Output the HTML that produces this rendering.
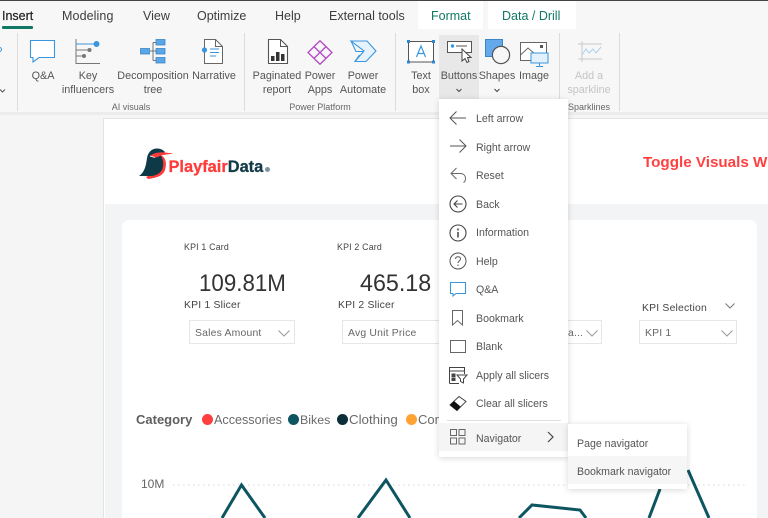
<!DOCTYPE html>
<html><head><meta charset="utf-8">
<style>
html,body{margin:0;padding:0}
body{width:768px;height:518px;overflow:hidden;position:relative;background:#f5f5f5;font-family:"Liberation Sans",sans-serif;color:#444}
.a{position:absolute}
.t{position:absolute;white-space:nowrap}
.c{position:absolute;text-align:center;white-space:nowrap;transform:translateX(-50%);font-size:10.8px;line-height:14.3px;color:#555}
.tab{position:absolute;top:9px;font-size:12.5px;line-height:15px;color:#3d3d3d;white-space:nowrap}
.g{position:absolute;top:102px;font-size:9px;line-height:11px;color:#666;transform:translateX(-50%);white-space:nowrap}
.sep{position:absolute;top:33px;width:1px;height:78px;background:#dcdcdc}
.mi{position:absolute;left:476px;font-size:10.6px;line-height:14px;color:#555;white-space:nowrap}
.din{font-size:9.5px;color:#444;letter-spacing:.2px}
.dd{position:absolute;height:24px;background:#fff;border:1px solid #e6e6e6;box-sizing:border-box;font-size:10.4px;line-height:26px;color:#666;padding-left:5px;white-space:nowrap;overflow:hidden;letter-spacing:.2px}
svg{position:absolute;overflow:visible}
</style></head>
<body>
<!-- ribbon -->
<div class="a" style="left:0;top:0;width:768px;height:1px;background:#444"></div>
<div class="a" style="left:0;top:1px;width:768px;height:112px;background:#f8f7f7"></div>
<div class="a" style="left:0;top:112px;width:768px;height:3px;background:#ececec"></div>
<div class="a" style="left:418px;top:1px;width:65px;height:28px;background:#fff"></div>
<div class="a" style="left:488px;top:1px;width:88px;height:28px;background:#fff"></div>
<div class="tab" style="left:2px;color:#222;-webkit-text-stroke:.2px #222">Insert</div>
<div class="a" style="left:2px;top:26px;width:31px;height:3px;background:#117865;border-radius:1px"></div>
<div class="tab" style="left:62px;letter-spacing:.1px">Modeling</div>
<div class="tab" style="left:143px">View</div>
<div class="tab" style="left:197px">Optimize</div>
<div class="tab" style="left:275px">Help</div>
<div class="tab" style="left:329px">External tools</div>
<div class="tab" style="left:431px;color:#117865">Format</div>
<div class="tab" style="left:502px;color:#117865">Data / Drill</div>
<div class="sep" style="left:17px"></div>
<div class="sep" style="left:244px"></div>
<div class="sep" style="left:395px"></div>
<div class="sep" style="left:559px"></div>
<div class="sep" style="left:619px"></div>
<div class="a" style="left:439px;top:35px;width:40px;height:65px;background:#e8e8e8"></div>
<div class="a" style="left:-3px;top:47px;width:5px;height:5px;border-radius:50%;border:1px solid #3a96dd;box-sizing:border-box"></div>
<svg style="left:0;top:88px" width="8" height="6"><path d="M0 1.5 L2.5 4 L5 1.5" fill="none" stroke="#555" stroke-width="1"/></svg>

<!-- Q&A -->
<svg style="left:30px;top:40px" width="26" height="24"><path d="M.5.5H24.5V17.5H9L3 22V17.5H.5Z" fill="#fff" stroke="#3a96dd" stroke-width="1.1"/></svg>
<!-- key influencers -->
<svg style="left:75px;top:39px" width="26" height="26" fill="none"><path d="M1 0V24.5H25" stroke="#777" stroke-width="1"/><path d="M1 5H20" stroke="#3a96dd" stroke-width="1"/><path d="M1 11H14" stroke="#777"/><path d="M1 17H8" stroke="#777"/><circle cx="21.5" cy="5" r="3" fill="#3a96dd"/><circle cx="14.5" cy="11" r="2" fill="#777"/><circle cx="9" cy="17" r="2" fill="#777"/></svg>
<!-- decomposition -->
<svg style="left:140px;top:39px" width="26" height="25" fill="#5ba6e6" stroke="#3a86c8" stroke-width=".8"><rect x=".5" y="9.5" width="9" height="5.5"/><rect x="16" y=".5" width="9" height="5.5"/><rect x="16" y="9.5" width="9" height="5.5"/><rect x="16" y="18.5" width="9" height="5.5"/><path d="M10 12H16M13 3.5V21.5M13 3.5H16M13 21.5H16" fill="none" stroke="#555"/></svg>
<!-- narrative -->
<svg style="left:202px;top:39px" width="22" height="26" fill="none"><path d="M2.5.5H13.5L20.5 7.5V24.5H2.5Z" fill="#fff" stroke="#666"/><path d="M13.5.5V7.5H20.5" stroke="#666"/><circle cx="2.5" cy="11" r="2.6" fill="#3a96dd"/><path d="M8 10H17M8 13.5H17M8 17H14" stroke="#3a96dd"/></svg>
<!-- paginated -->
<svg style="left:267px;top:39px" width="22" height="26" fill="none"><path d="M1.5.5H13.5L20.5 7.5V24.5H1.5Z" fill="#fff" stroke="#555" stroke-width="1.1"/><path d="M13.5.5V7.5H20.5" stroke="#555"/><rect x="4" y="17" width="3.5" height="5" fill="#333"/><rect x="9" y="13" width="3.5" height="9" fill="#333"/><rect x="14" y="15" width="3.5" height="7" fill="#333"/></svg>
<!-- power apps -->
<svg style="left:307px;top:40px" width="26" height="25" fill="none" stroke="#b14fc5" stroke-width="1.4" stroke-linejoin="round"><path d="M13 .7L25 12.5L13 24.3L1 12.5Z"/><path d="M7 6.6L19 18.4M19 6.6L7 18.4"/></svg>
<!-- power automate -->
<svg style="left:350px;top:40px" width="27" height="24" fill="none" stroke="#3a96dd" stroke-width="1.1"><path d="M1 1H17L26 11L16 21.500H5L14 11Z" fill="#e6f3fc"/><path d="M1 1L6 11.500H14M5 21.500L9.500 15"/></svg>
<!-- text box -->
<svg style="left:407px;top:40px" width="28" height="24" fill="none"><rect x="1.5" y="1.5" width="25" height="20.5" stroke="#555" fill="#fff"/><path d="M9.5 17L14 6L18.5 17M11 13.5H17" stroke="#3a96dd" stroke-width="1.2"/><g fill="#2b88d8"><rect x="0" y="0" width="3" height="3"/><rect x="25" y="0" width="3" height="3"/><rect x="0" y="20.5" width="3" height="3"/><rect x="25" y="20.5" width="3" height="3"/></g></svg>
<!-- buttons -->
<svg style="left:447px;top:41px" width="28" height="24" fill="none"><rect x=".5" y=".5" width="24" height="11" fill="#fff" stroke="#555"/><circle cx="5.5" cy="5" r="1.7" fill="#3a96dd"/><path d="M9 5H20" stroke="#555"/><path d="M15 8V20L18 17.500L20 21.500L22 20.500L20.500 16.500H24Z" fill="#fff" stroke="#444" stroke-width="1"/></svg>
<!-- shapes -->
<svg style="left:485px;top:39px" width="28" height="28"><rect x=".5" y=".5" width="17" height="17" fill="#63a9ec" stroke="#3a86c8"/><circle cx="16" cy="16" r="8.600" fill="#f8f7f7" stroke="#555" stroke-width="1.2"/></svg>
<!-- image -->
<svg style="left:520px;top:42px" width="30" height="26" fill="none"><rect x=".5" y=".5" width="26" height="18" fill="#fff" stroke="#666"/><path d="M.5 13L8 6L15 12" stroke="#666"/><rect x="20" y="3" width="3" height="3" fill="#555"/><rect x="11" y="11" width="17" height="10" fill="#e2f1fb" stroke="#3a96dd"/><path d="M19.500 21V24.500M16 24.500H23" stroke="#3a96dd"/></svg>
<!-- sparkline -->
<svg style="left:577px;top:41px" width="26" height="22" fill="none" stroke="#c8c8c8"><path d="M1 3H25M1 18H25M5 0V21"/><path d="M5 14L9 8L12 12L16 8L19 12L24 6" stroke="#a9cfee"/></svg>

<div class="c" style="left:43px;top:69px">Q&amp;A</div>
<div class="c" style="left:88px;top:69px">Key<br>influencers</div>
<div class="c" style="left:153px;top:69px">Decomposition<br>tree</div>
<div class="c" style="left:214px;top:69px">Narrative</div>
<div class="c" style="left:277px;top:69px">Paginated<br>report</div>
<div class="c" style="left:320px;top:69px">Power<br>Apps</div>
<div class="c" style="left:363px;top:69px">Power<br>Automate</div>
<div class="c" style="left:421px;top:69px">Text<br>box</div>
<div class="c" style="left:459px;top:69px">Buttons</div>
<div class="c" style="left:497px;top:69px">Shapes</div>
<div class="c" style="left:534px;top:69px">Image</div>
<div class="c" style="left:589px;top:69px;color:#c4c4c4">Add a<br>sparkline</div>
<svg style="left:456px;top:88px" width="6" height="5"><path d="M.5 1L3 3.500L5.500 1" fill="none" stroke="#444"/></svg>
<svg style="left:494px;top:88px" width="6" height="5"><path d="M.5 1L3 3.500L5.500 1" fill="none" stroke="#444"/></svg>
<div class="g" style="left:131px">AI visuals</div>
<div class="g" style="left:320px">Power Platform</div>
<div class="g" style="left:589px">Sparklines</div>

<!-- report page -->
<div class="a" style="left:103px;top:118px;width:665px;height:400px;background:#fff;border:1px solid #e4e4e4;border-right:0;border-bottom:0;box-sizing:border-box"></div>
<div class="a" style="left:105px;top:204px;width:663px;height:314px;background:#f3f4f6"></div>
<div class="a" style="left:122px;top:220px;width:635px;height:298px;background:#fff;border-radius:7px 7px 0 0"></div>

<!-- logo -->
<svg style="left:0;top:0" width="768" height="518">
<path d="M148 179C156 178 163 176 165 170C167 163 166 158 161 155L173 153.500L156 152L152 158C156 160 158 166 156 172L146 177Z" fill="#ff3b3b"/>
<path d="M139 176C145 172 146 165 147 158C148 152 152 148.500 157 148.500C161 148.500 163 150 165 152L160 155C163 158 163.500 162 163 167C162 172 158 175 152 176Z" fill="#0e3a47"/>
<path d="M150 156C154 152.500 160 152 165 152.500L173 153.500L160 155.500C158 158 153 158 150 156Z" fill="#ff3b3b"/>
<path d="M150 156L155 157.500" stroke="#fff" stroke-width=".8"/>
</svg>
<div class="t" style="left:168.500px;top:158px;font-size:16.400px;line-height:18px;font-weight:700;color:#ff3b3b;-webkit-text-stroke:.25px #ff3b3b">Playfair<span style="color:#123c49;-webkit-text-stroke:.25px #123c49">Data</span></div>
<div class="a" style="left:265px;top:167px;width:5px;height:5px;border-radius:50%;background:#7f96a0"></div>
<div class="t" style="left:643px;top:154px;font-size:15.200px;line-height:18px;font-weight:700;color:#ff4040">Toggle Visuals W</div>

<!-- KPI -->
<div class="t din" style="left:184px;top:242px;font-size:8.800px;line-height:11px">KPI 1 Card</div>
<div class="t din" style="left:337px;top:242px;font-size:8.800px;line-height:11px">KPI 2 Card</div>
<div class="t" style="left:199px;top:270px;font-size:24px;line-height:28px;color:#333;transform:scaleX(.93);transform-origin:0 0">109.81M</div>
<div class="t" style="left:360px;top:270px;font-size:24px;line-height:28px;color:#333;transform:scaleX(.97);transform-origin:0 0">465.18</div>
<div class="t din" style="left:184px;top:299px;font-size:10.400px;line-height:13px">KPI 1 Slicer</div>
<div class="t din" style="left:338px;top:299px;font-size:10.400px;line-height:13px">KPI 2 Slicer</div>
<div class="dd" style="left:189px;top:320px;width:106px">Sales Amount</div>
<svg style="left:278px;top:330px" width="12" height="7"><path d="M.5.5L6 6L11.500.5" fill="none" stroke="#999"/></svg>
<div class="dd" style="left:342px;top:320px;width:260px">Avg Unit Price</div>
<div class="t" style="left:568px;top:327px;font-size:10.400px;line-height:13px;color:#666;letter-spacing:.2px">a...</div>
<svg style="left:586px;top:330px" width="12" height="7"><path d="M.5.5L6 6L11.500.5" fill="none" stroke="#999"/></svg>
<div class="t din" style="left:642px;top:302px;font-size:10.400px;line-height:13px">KPI Selection</div>
<svg style="left:725px;top:303px" width="10" height="6"><path d="M.5.5L5 5L9.500.5" fill="none" stroke="#777"/></svg>
<div class="dd" style="left:639px;top:320px;width:98px">KPI 1</div>
<svg style="left:721px;top:330px" width="12" height="7"><path d="M.5.5L6 6L11.500.5" fill="none" stroke="#999"/></svg>

<!-- legend -->
<div class="t" style="left:136px;top:412px;font-size:13px;line-height:16px;font-weight:700;color:#5f5f5f">Category</div>
<div class="a" style="left:202px;top:414px;width:11px;height:11px;border-radius:50%;background:#ff3f3f"></div>
<div class="t" style="left:214px;top:412px;font-size:12.600px;line-height:16px;color:#6a6a6a">Accessories</div>
<div class="a" style="left:288px;top:414px;width:11px;height:11px;border-radius:50%;background:#0d5560"></div>
<div class="t" style="left:300px;top:412px;font-size:12.400px;line-height:16px;color:#6a6a6a">Bikes</div>
<div class="a" style="left:337px;top:414px;width:11px;height:11px;border-radius:50%;background:#0b2f3a"></div>
<div class="t" style="left:349px;top:412px;font-size:13.300px;line-height:16px;color:#6a6a6a">Clothing</div>
<div class="a" style="left:406px;top:414px;width:11px;height:11px;border-radius:50%;background:#ffa333"></div>
<div class="t" style="left:418px;top:412px;font-size:13px;line-height:16px;color:#6a6a6a">Con</div>

<!-- chart -->
<div class="t" style="left:141px;top:477px;font-size:12px;line-height:15px;color:#666">10M</div>
<svg style="left:0;top:0" width="768" height="518" fill="none"><path d="M173 485H745" stroke="#d4d4d4" stroke-dasharray="1.500 3.500"/><path d="M222 518L241.500 485L265 518M358 518L386 480L410 518M519 518L532 505L580 510L586 518M649 518L660 489M688 470L709 518" stroke="#0d5560" stroke-width="3" stroke-linejoin="miter"/></svg>

<!-- menu -->
<div class="a" style="left:439px;top:99px;width:129px;height:358px;background:#fff;box-shadow:0 1px 6px rgba(0,0,0,.16)"></div>
<div class="a" style="left:439px;top:423px;width:129px;height:28px;background:#f5f5f5"></div>
<div class="a" style="left:447px;top:420px;width:114px;height:1px;background:#dedede"></div>
<div class="mi" style="top:112px">Left arrow</div>
<div class="mi" style="top:141px">Right arrow</div>
<div class="mi" style="top:169px">Reset</div>
<div class="mi" style="top:198px">Back</div>
<div class="mi" style="top:226px">Information</div>
<div class="mi" style="top:255px">Help</div>
<div class="mi" style="top:283px">Q&amp;A</div>
<div class="mi" style="top:312px">Bookmark</div>
<div class="mi" style="top:340px">Blank</div>
<div class="mi" style="top:369px">Apply all slicers</div>
<div class="mi" style="top:397px">Clear all slicers</div>
<div class="mi" style="top:432px">Navigator</div>
<svg style="left:449px;top:110px" width="20" height="16" fill="none" stroke="#555" stroke-width="1"><path d="M1 8H17M7.500 1.500L1 8L7.500 14.500"/></svg>
<svg style="left:449px;top:139px" width="20" height="16" fill="none" stroke="#555" stroke-width="1"><path d="M1 7H17M10.500.5L17 7L10.500 13.500"/></svg>
<svg style="left:450px;top:167px" width="18" height="17" fill="none" stroke="#666" stroke-width="1"><path d="M6.500 1L1 6.500L6.500 12M1 6.500H10C14 6.500 15.500 9 15.500 11.500C15.500 13.500 14.500 15 13.500 15.500"/></svg>
<svg style="left:449px;top:195px" width="18" height="18" fill="none" stroke="#444" stroke-width="1.100"><circle cx="9" cy="9" r="8"/><path d="M13.500 9H5M8.500 5.500L5 9L8.500 12.500"/></svg>
<svg style="left:449px;top:224px" width="18" height="18" fill="none" stroke="#444" stroke-width="1.100"><circle cx="9" cy="9" r="8"/><path d="M9 8V13.500M9 4.500V6.500" stroke-width="1.500"/></svg>
<svg style="left:449px;top:252px" width="18" height="18" fill="none" stroke="#555" stroke-width="1"><circle cx="9" cy="9" r="8"/><path d="M6.500 7C6.500 4 11.500 4 11.500 7C11.500 9 9 9 9 11"/><path d="M9 12.500V14"/></svg>
<svg style="left:450px;top:282px" width="17" height="16" fill="none" stroke="#3a96dd" stroke-width="1.100"><path d="M.5.500H15.500V11.500H6L3 14V11.500H.5Z"/></svg>
<svg style="left:452px;top:310px" width="11" height="16" fill="none" stroke="#666" stroke-width="1"><path d="M.5.500H10.500V15L5.500 10.500L.5 15Z"/></svg>
<svg style="left:450px;top:340px" width="16" height="13" fill="none" stroke="#666" stroke-width="1"><rect x=".5" y=".5" width="15" height="12"/></svg>
<svg style="left:449px;top:367px" width="19" height="17" fill="none" stroke="#444" stroke-width="1"><path d="M.5 16.500V.5H15.500V7M.5 4H15.500M.5 16.500H10"/><rect x="3" y="7" width="3" height="2.500" fill="#444"/><rect x="3" y="11" width="3" height="2.500" fill="#444"/><path d="M8 8H18L14.500 12V16L11.500 14.500V12Z" fill="#fff"/></svg>
<svg style="left:449px;top:395px" width="18" height="17"><path d="M1 10L10 1.500L17 6.500L8 15.500Z" fill="#fff" stroke="#444"/><path d="M1 10L5 6L11.500 11.500L8 16Z" fill="#111"/></svg>
<svg style="left:450px;top:429px" width="16" height="16" fill="none" stroke="#666" stroke-width="1"><rect x=".5" y=".5" width="6" height="6"/><rect x="9" y=".5" width="6" height="6"/><rect x=".5" y="9" width="6" height="6"/><rect x="9" y="9" width="6" height="6"/></svg>
<svg style="left:547px;top:431px" width="8" height="12" fill="none" stroke="#444" stroke-width="1.200"><path d="M1 1L6 6L1 11"/></svg>

<!-- submenu -->
<div class="a" style="left:568px;top:424px;width:119px;height:65px;background:#fff;box-shadow:0 1px 6px rgba(0,0,0,.16)"></div>
<div class="a" style="left:568px;top:456px;width:119px;height:28px;background:#f6f6f6"></div>
<div class="t" style="left:577px;top:437px;font-size:10.600px;line-height:14px;color:#555">Page navigator</div>
<div class="t" style="left:577px;top:465px;font-size:10.600px;line-height:14px;color:#555">Bookmark navigator</div>
</body></html>
